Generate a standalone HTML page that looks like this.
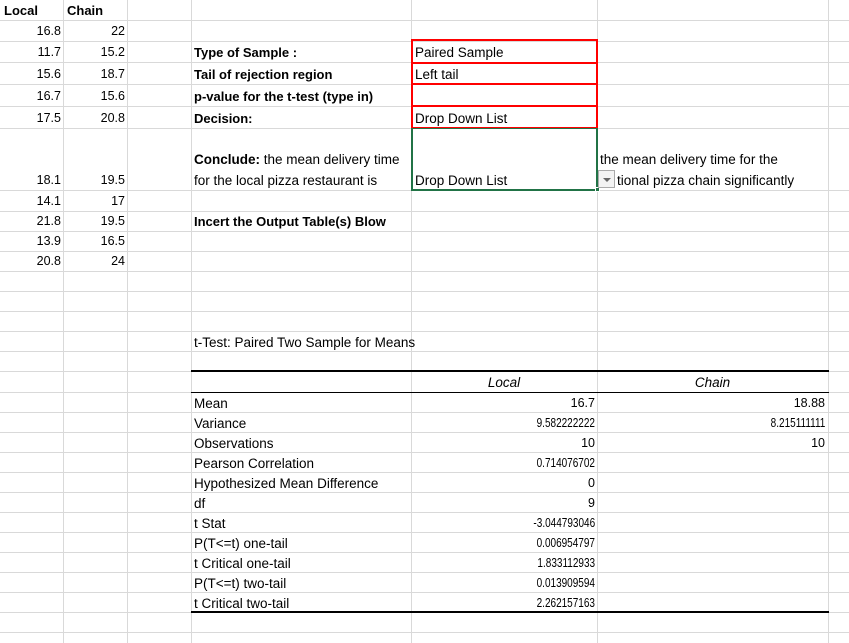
<!DOCTYPE html>
<html><head><meta charset="utf-8"><style>
*{margin:0;padding:0;box-sizing:border-box}
body{width:849px;height:643px;background:#fff;position:relative;overflow:hidden;font-family:"Liberation Sans",sans-serif;font-size:13.5px;color:#000}
.v{position:absolute;top:0;width:1px;height:643px;background:#d9d9d9}
.h{position:absolute;left:0;width:849px;height:1px;background:#d9d9d9}
.t{position:absolute;white-space:nowrap;line-height:15px}
.r{text-align:right;font-size:12.5px}
.n{font-size:12.5px;transform:scaleX(0.8);transform-origin:right center}
.b{font-weight:bold;font-size:13px}
.box{position:absolute;border:2px solid #f00}
.k{position:absolute;background:#000}
</style></head><body>
<div class="v" style="left:63px"></div><div class="v" style="left:127px"></div><div class="v" style="left:191px"></div><div class="v" style="left:411px"></div><div class="v" style="left:597px"></div><div class="v" style="left:828px"></div>
<div class="h" style="top:20px"></div><div class="h" style="top:41px"></div><div class="h" style="top:62px"></div><div class="h" style="top:84px"></div><div class="h" style="top:106px"></div><div class="h" style="top:128px"></div><div class="h" style="top:190px"></div><div class="h" style="top:211px"></div><div class="h" style="top:231px"></div><div class="h" style="top:251px"></div><div class="h" style="top:271px"></div><div class="h" style="top:291px"></div><div class="h" style="top:311px"></div><div class="h" style="top:331px"></div><div class="h" style="top:351px"></div><div class="h" style="top:371px"></div><div class="h" style="top:392px"></div><div class="h" style="top:412px"></div><div class="h" style="top:432px"></div><div class="h" style="top:452px"></div><div class="h" style="top:472px"></div><div class="h" style="top:492px"></div><div class="h" style="top:512px"></div><div class="h" style="top:532px"></div><div class="h" style="top:552px"></div><div class="h" style="top:572px"></div><div class="h" style="top:592px"></div><div class="h" style="top:612px"></div><div class="h" style="top:632px"></div>

<div class="t b" style="left:4px;top:3px">Local</div><div class="t b" style="left:67px;top:3px">Chain</div>

<div class="t r" style="right:788px;top:24px">16.8</div><div class="t r" style="right:724px;top:24px">22</div>
<div class="t r" style="right:788px;top:45px">11.7</div><div class="t r" style="right:724px;top:45px">15.2</div>
<div class="t r" style="right:788px;top:67px">15.6</div><div class="t r" style="right:724px;top:67px">18.7</div>
<div class="t r" style="right:788px;top:89px">16.7</div><div class="t r" style="right:724px;top:89px">15.6</div>
<div class="t r" style="right:788px;top:111px">17.5</div><div class="t r" style="right:724px;top:111px">20.8</div>
<div class="t r" style="right:788px;top:173px">18.1</div><div class="t r" style="right:724px;top:173px">19.5</div>
<div class="t r" style="right:788px;top:194px">14.1</div><div class="t r" style="right:724px;top:194px">17</div>
<div class="t r" style="right:788px;top:214px">21.8</div><div class="t r" style="right:724px;top:214px">19.5</div>
<div class="t r" style="right:788px;top:234px">13.9</div><div class="t r" style="right:724px;top:234px">16.5</div>
<div class="t r" style="right:788px;top:254px">20.8</div><div class="t r" style="right:724px;top:254px">24</div>

<div class="t b" style="left:194px;top:45px">Type of Sample :</div>
<div class="t b" style="left:194px;top:67px">Tail of rejection region</div>
<div class="t b" style="left:194px;top:89px">p-value for the t-test (type in)</div>
<div class="t b" style="left:194px;top:111px">Decision:</div>
<div class="t" style="left:194px;top:152px"><b>Conclude:</b> the mean delivery time</div>
<div class="t" style="left:194px;top:173px">for the local pizza restaurant is</div>
<div class="t b" style="left:194px;top:214px">Incert the Output Table(s) Blow</div>

<div class="box" style="left:411px;top:39px;width:187px;height:25px"></div>
<div class="box" style="left:411px;top:62px;width:187px;height:23px"></div>
<div class="box" style="left:411px;top:83px;width:187px;height:24px"></div>
<div class="box" style="left:411px;top:105px;width:187px;height:24px"></div>
<div class="t" style="left:415px;top:45px">Paired Sample</div>
<div class="t" style="left:415px;top:67px">Left tail</div>
<div class="t" style="left:415px;top:111px">Drop Down List</div>
<div style="position:absolute;left:411px;top:128px;width:187px;height:63px;border:2px solid #217346;border-top:1px solid #217346"></div>
<div style="position:absolute;left:595px;top:187px;width:5px;height:5px;background:#217346;border:1px solid #fff"></div>
<div class="t" style="left:415px;top:173px">Drop Down List</div>
<div class="t" style="left:600px;top:152px">the mean delivery time for the</div>
<div class="t" style="left:617px;top:173px">tional pizza chain significantly</div>
<div style="position:absolute;left:598px;top:170px;width:17px;height:18px;border:1px solid #aaa;background:#f3f3f3"><div style="position:absolute;left:4px;top:7px;width:0;height:0;border-left:4px solid transparent;border-right:4px solid transparent;border-top:4px solid #666"></div></div>

<div class="t" style="left:194px;top:335px">t-Test: Paired Two Sample for Means</div>
<div class="k" style="left:191px;top:370px;width:638px;height:2px"></div>
<div class="k" style="left:191px;top:392px;width:638px;height:1px"></div>
<div class="k" style="left:191px;top:611px;width:638px;height:2px"></div>
<div class="t" style="left:411px;width:186px;top:375px;text-align:center;font-style:italic">Local</div>
<div class="t" style="left:597px;width:231px;top:375px;text-align:center;font-style:italic">Chain</div>

<div class="t" style="left:194px;top:396px">Mean</div><div class="t r" style="right:254px;top:396px">16.7</div><div class="t r" style="right:24px;top:396px">18.88</div>
<div class="t" style="left:194px;top:416px">Variance</div><div class="t r n" style="right:254px;top:416px">9.582222222</div><div class="t r n" style="right:24px;top:416px">8.215111111</div>
<div class="t" style="left:194px;top:436px">Observations</div><div class="t r" style="right:254px;top:436px">10</div><div class="t r" style="right:24px;top:436px">10</div>
<div class="t" style="left:194px;top:456px">Pearson Correlation</div><div class="t r n" style="right:254px;top:456px">0.714076702</div>
<div class="t" style="left:194px;top:476px">Hypothesized Mean Difference</div><div class="t r" style="right:254px;top:476px">0</div>
<div class="t" style="left:194px;top:496px">df</div><div class="t r" style="right:254px;top:496px">9</div>
<div class="t" style="left:194px;top:516px">t Stat</div><div class="t r n" style="right:254px;top:516px">-3.044793046</div>
<div class="t" style="left:194px;top:536px">P(T&lt;=t) one-tail</div><div class="t r n" style="right:254px;top:536px">0.006954797</div>
<div class="t" style="left:194px;top:556px">t Critical one-tail</div><div class="t r n" style="right:254px;top:556px">1.833112933</div>
<div class="t" style="left:194px;top:576px">P(T&lt;=t) two-tail</div><div class="t r n" style="right:254px;top:576px">0.013909594</div>
<div class="t" style="left:194px;top:596px">t Critical two-tail</div><div class="t r n" style="right:254px;top:596px">2.262157163</div>
</body></html>
